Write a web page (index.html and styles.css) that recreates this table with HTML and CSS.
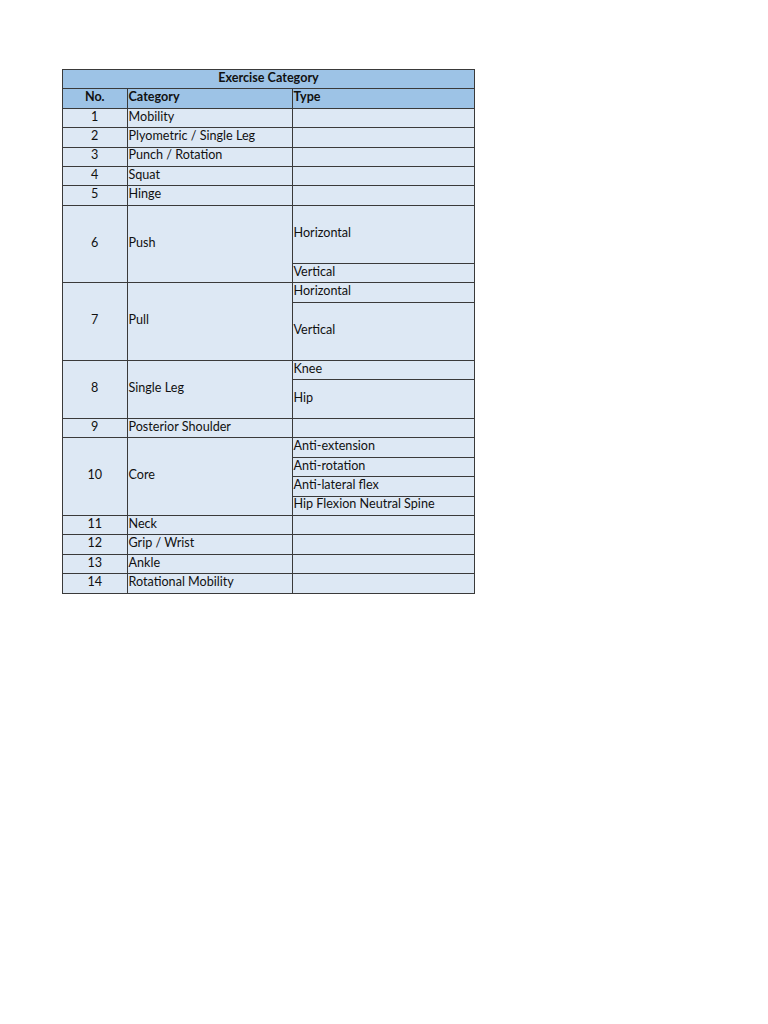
FILE: index.html
```html
<!DOCTYPE html>
<html>
<head>
<meta charset="utf-8">
<link rel="stylesheet" href="styles.css">
</head>
<body>
<div class="page">
  <div class="sheet">
    <div class="cell title">Exercise Category</div>
    <div class="cell head num">No.</div>
    <div class="cell head">Category</div>
    <div class="cell head">Type</div>

    <div class="cell num">1</div><div class="cell">Mobility</div><div class="cell"></div>
    <div class="cell num">2</div><div class="cell">Plyometric / Single Leg</div><div class="cell"></div>
    <div class="cell num">3</div><div class="cell">Punch / Rotation</div><div class="cell"></div>
    <div class="cell num">4</div><div class="cell">Squat</div><div class="cell"></div>
    <div class="cell num">5</div><div class="cell">Hinge</div><div class="cell"></div>

    <div class="cell num span-4">6</div><div class="cell span-4">Push</div>
    <div class="cell span-3">Horizontal</div>
    <div class="cell">Vertical</div>

    <div class="cell num span-4">7</div><div class="cell span-4">Pull</div>
    <div class="cell">Horizontal</div>
    <div class="cell span-3">Vertical</div>

    <div class="cell num span-3">8</div><div class="cell span-3">Single Leg</div>
    <div class="cell">Knee</div>
    <div class="cell span-2">Hip</div>

    <div class="cell num">9</div><div class="cell">Posterior Shoulder</div><div class="cell"></div>

    <div class="cell num span-4">10</div><div class="cell span-4">Core</div>
    <div class="cell">Anti-extension</div>
    <div class="cell">Anti-rotation</div>
    <div class="cell">Anti-lateral flex</div>
    <div class="cell">Hip Flexion Neutral Spine</div>

    <div class="cell num">11</div><div class="cell">Neck</div><div class="cell"></div>
    <div class="cell num">12</div><div class="cell">Grip / Wrist</div><div class="cell"></div>
    <div class="cell num">13</div><div class="cell">Ankle</div><div class="cell"></div>
    <div class="cell num">14</div><div class="cell">Rotational Mobility</div><div class="cell"></div>
  </div>
</div>
</body>
</html>
```
FILE: styles.css
```css
html, body {
  margin: 0;
  padding: 0;
  background: #ffffff;
}

.page {
  padding: 69px 0 0 62px;
  font-family: Lato, "Open Sans", sans-serif;
  font-size: 12.6px;
  color: #111111;
}

.sheet {
  display: grid;
  grid-template-columns: 63.5px 164px 181.5px;
  grid-auto-rows: 18.4px;
  gap: 1px;
  padding: 1px;
  width: max-content;
  background: #3a3a3a;
}

.cell {
  background: #dde8f4;
  display: flex;
  align-items: center;
  padding: 0 1px 2px 1px;
  white-space: nowrap;
  overflow: hidden;
  line-height: 1;
}

.num {
  justify-content: center;
}

.title {
  grid-column: 1 / -1;
  justify-content: center;
  background: #9dc3e6;
  font-weight: 700;
}

.head {
  background: #9dc3e6;
  font-weight: 700;
}

.span-2 { grid-row: span 2; }
.span-3 { grid-row: span 3; }
.span-4 { grid-row: span 4; }
```
